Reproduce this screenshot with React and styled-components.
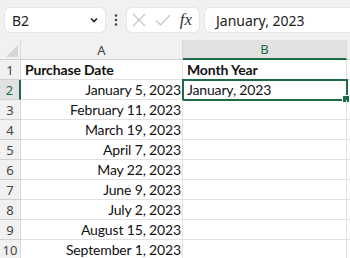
import React from "react";
import styled, { createGlobalStyle } from "styled-components";

const Global = createGlobalStyle`
  html, body { margin: 0; padding: 0; background: #fff; overflow: hidden; }
  * { box-sizing: border-box; }
`;

const Page = styled.div`
  width: 350px;
  height: 258px;
  overflow: hidden;
  display: flex;
  flex-direction: column;
  background: #fff;
`;

const Toolbar = styled.div`
  height: 40px;
  flex: none;
  display: flex;
  align-items: center;
  padding-left: 5px;
  background: #f1f1f1;
  font-family: "Noto Sans", "Open Sans", sans-serif;
  font-size: 14px;
  color: #222;
`;

const Field = styled.div`
  height: 24px;
  background: #fff;
  border-radius: 5px;
  display: flex;
  align-items: center;
  box-shadow: 0 0 0 1px #e6e6e6;
`;

const NameBox = styled(Field)`
  width: 100px;
  padding: 0 6px 0 7px;
  justify-content: space-between;
`;

const Dots = styled.div`
  width: 22px;
  display: flex;
  justify-content: center;
`;

const ActionBox = styled(Field)`
  width: 72px;
  padding: 0 4px 0 4px;
  justify-content: space-between;
`;

const FormulaBox = styled(Field)`
  flex: 1;
  margin-left: 6px;
  border-radius: 5px 0 0 5px;
  padding-left: 11px;
`;

const Fx = styled.span`
  font-family: "Liberation Serif", serif;
  font-style: italic;
  font-size: 17px;
  color: #333;
  margin-right: 3px;
`;

const Grid = styled.div`
  display: grid;
  grid-template-columns: 21px 162px 164px 3px;
  grid-auto-rows: 20px;
  font-family: "Lato", "Liberation Sans", sans-serif;
  font-size: 14px;
  letter-spacing: -0.15px;
  color: #111;
`;

const Head = styled.div`
  background: ${(p) => (p.$active ? "#e2e2e2" : "#f1f1f1")};
  color: ${(p) => (p.$active ? "#1f6b43" : "#444")};
  font-family: "Noto Sans", "Open Sans", sans-serif;
  font-size: 13px;
  letter-spacing: 0;
  display: flex;
  align-items: center;
  justify-content: center;
  border-right: 1px solid #d8d8d8;
  border-bottom: ${(p) => (p.$activeCol ? "2px solid #1f6b43" : "1px solid #d0d0d0")};
  ${(p) => p.$activeRow && "border-right: 2px solid #1f6b43;"}
  position: relative;
`;

const Corner = styled(Head)`
  &::after {
    content: "";
    position: absolute;
    right: 2px;
    bottom: 2px;
    width: 0;
    height: 0;
    border-left: 12px solid transparent;
    border-bottom: 12px solid #d6d6d6;
  }
`;

const Cell = styled.div`
  border-right: 1px solid #e1e1e1;
  border-bottom: 1px solid #e1e1e1;
  display: flex;
  align-items: center;
  justify-content: ${(p) => (p.$right ? "flex-end" : "flex-start")};
  padding: 0 1px 0 4px;
  font-weight: ${(p) => (p.$bold ? 700 : 400)};
  white-space: nowrap;
  position: relative;
`;

const Selected = styled(Cell)`
  &::before {
    content: "";
    position: absolute;
    left: -1px;
    top: -1px;
    right: -2px;
    bottom: -2px;
    border: 2px solid #1f6b43;
    pointer-events: none;
  }
  &::after {
    content: "";
    position: absolute;
    right: -4px;
    bottom: -4px;
    width: 6px;
    height: 6px;
    background: #1f6b43;
    border: 1px solid #fff;
  }
`;

const Gap = styled.div`
  border-bottom: 1px solid #e1e1e1;
`;

const HeadGap = styled.div`
  background: #f1f1f1;
  border-bottom: 1px solid #d0d0d0;
`;

const dates = [
  "January 5, 2023",
  "February 11, 2023",
  "March 19, 2023",
  "April 7, 2023",
  "May 22, 2023",
  "June 9, 2023",
  "July 2, 2023",
  "August 15, 2023",
  "September 1, 2023",
];

export default function App() {
  return (
    <Page>
      <Global />
      <Toolbar>
        <NameBox>
          <span>B2</span>
          <svg width="10" height="10" viewBox="0 0 10 10">
            <path d="M2 3.5 L5 6.5 L8 3.5" fill="none" stroke="#222" strokeWidth="1.6" />
          </svg>
        </NameBox>
        <Dots>
          <svg width="4" height="14" viewBox="0 0 4 14">
            <circle cx="2" cy="2.5" r="1.3" fill="#444" />
            <circle cx="2" cy="7" r="1.3" fill="#444" />
            <circle cx="2" cy="11.5" r="1.3" fill="#444" />
          </svg>
        </Dots>
        <ActionBox>
          <svg width="16" height="16" viewBox="0 0 16 16">
            <path d="M2 2 L14 14 M14 2 L2 14" stroke="#c4c4c4" strokeWidth="1.2" fill="none" />
          </svg>
          <svg width="18" height="16" viewBox="0 0 18 16">
            <path d="M2 8.5 L6.5 13 L16 3" stroke="#c4c4c4" strokeWidth="1.2" fill="none" />
          </svg>
          <Fx>fx</Fx>
        </ActionBox>
        <FormulaBox>January, 2023</FormulaBox>
      </Toolbar>
      <Grid>
        <Corner />
        <Head>A</Head>
        <Head $active $activeCol>B</Head>
        <HeadGap />

        <Head $row>1</Head>
        <Cell $bold>Purchase Date</Cell>
        <Cell $bold>Month Year</Cell>
        <Gap />

        {dates.map((d, i) => (
          <React.Fragment key={d}>
            <Head $row $active={i === 0} $activeRow={i === 0}>
              {i + 2}
            </Head>
            <Cell $right>{d}</Cell>
            {i === 0 ? <Selected>January, 2023</Selected> : <Cell />}
            <Gap />
          </React.Fragment>
        ))}
      </Grid>
    </Page>
  );
}
